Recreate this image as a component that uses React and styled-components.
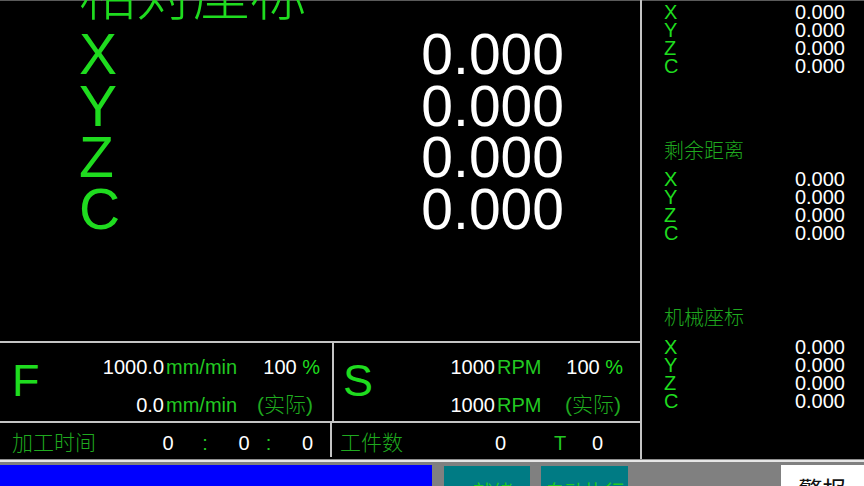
import React from "react";
import styled, { createGlobalStyle } from "styled-components";

const GlobalStyle = createGlobalStyle`
  html, body {
    margin: 0;
    padding: 0;
    background: #000;
    overflow: hidden;
  }
  body {
    font-family: "Liberation Sans", Arial, "Noto Sans CJK SC", sans-serif;
  }
`;

const GREEN = "#1fdc1f";
const UNIT = "#22c822";
const LABEL = "#1fa91f";
const LINE = "#c4c4c4";
const CJK = `"Liberation Sans", "Noto Sans CJK SC", sans-serif`;

const Screen = styled.div`
  width: 864px;
  height: 486px;
  overflow: hidden;
  background: #000;
  box-shadow: inset 0 1px 0 #5a5a5a;
`;

// the capture starts part-way into the machine screen
const Frame = styled.div`
  margin-top: -40px;
  display: flex;
  flex-direction: column;
`;

const Main = styled.div`
  display: flex;
  height: 499px;
`;

const LeftCol = styled.div`
  width: 640px;
  flex-shrink: 0;
  display: flex;
  flex-direction: column;
  border-right: 2px solid ${LINE};
`;

const RightCol = styled.div`
  flex: 1;
  padding: 10px 19px 0 22px;
`;

const CoordPanel = styled.div`
  height: 383px;
  flex-shrink: 0;
  padding: 7px 76px 0 79px;
  box-sizing: border-box;
  border-bottom: 2px solid ${LINE};
`;

const BigTitle = styled.div`
  font-family: ${CJK};
  font-weight: 300;
  font-size: 57px;
  line-height: 56px;
  color: ${GREEN};
  margin-bottom: 6px;
`;

const BigRow = styled.div`
  display: flex;
  justify-content: space-between;
  font-size: 57px;
  line-height: 51.5px;
`;

const Axis = styled.span`
  color: ${GREEN};
`;

const Value = styled.span`
  color: #fff;
`;

const Group = styled.div`
  margin-bottom: 63px;
`;

const GroupTitle = styled.div`
  font-family: ${CJK};
  font-weight: 300;
  font-size: 20px;
  line-height: 26px;
  color: ${LABEL};
  margin-bottom: 6.5px;
`;

const SmallRow = styled.div`
  display: flex;
  justify-content: space-between;
  font-size: 20px;
  line-height: 18px;
`;

const Band = styled.div`
  display: flex;
  flex-shrink: 0;
  height: ${(p) => p.h}px;
  border-bottom: ${(p) => (p.ruled ? `2px solid ${LINE}` : "none")};
`;

const FeedCell = styled.div`
  width: ${(p) => (p.w ? `${p.w}px` : "auto")};
  flex: ${(p) => (p.w ? "none" : "1")};
  border-right: ${(p) => (p.w ? `2px solid ${LINE}` : "none")};
  display: grid;
  grid-template-columns: ${(p) => p.cols};
  grid-template-rows: 38px 36px;
  padding-top: 5px;
  font-size: 20px;
  line-height: 38px;
  white-space: nowrap;
`;

const FeedLetter = styled.div`
  grid-row: 1 / span 2;
  align-self: start;
  margin-top: 11px;
  padding-left: ${(p) => p.pad}px;
  font-size: 45px;
  line-height: 44px;
  color: ${GREEN};
`;

const Num = styled.div`
  color: #fff;
  text-align: right;
`;

const Unit = styled.div`
  color: ${UNIT};
  padding-left: 2px;
`;

const Pct = styled.div`
  text-align: ${(p) => (p.left ? "left" : "right")};
  color: #fff;
`;

const Actual = styled.span`
  font-family: ${CJK};
  font-weight: 300;
  font-size: 21px;
  color: ${LABEL};
`;

const TimeCell = styled.div`
  width: ${(p) => (p.w ? `${p.w}px` : "auto")};
  flex: ${(p) => (p.w ? "none" : "1")};
  border-right: ${(p) => (p.w ? `2px solid ${LINE}` : "none")};
  display: grid;
  grid-template-columns: ${(p) => p.cols};
  justify-items: center;
  padding-top: 3px;
  box-sizing: border-box;
  font-size: 20px;
  line-height: 34px;
  white-space: nowrap;
`;

const TimeLabel = styled.div`
  justify-self: start;
  padding-left: ${(p) => p.pad}px;
  font-family: ${CJK};
  font-weight: 300;
  font-size: 21px;
  color: ${LABEL};
`;

const Tick = styled.div`
  color: ${(p) => (p.green ? UNIT : "#fff")};
`;

const Rule = styled.div`
  height: 3px;
  background: linear-gradient(#8e8e8e 0 1px, #e6e6e6 1px 3px);
`;

const Strip = styled.div`
  display: flex;
  align-items: flex-start;
  height: 30px;
  padding-top: 3px;
  background: #808080;
`;

const Progress = styled.div`
  width: 432px;
  height: 40px;
  background: #0000ff;
`;

const SoftKey = styled.div`
  width: ${(p) => p.w}px;
  margin-left: ${(p) => p.gap}px;
  margin-top: 1px;
  height: 40px;
  background: #007b84;
  color: ${UNIT};
  font-family: ${CJK};
  font-size: 20px;
  line-height: 20px;
  padding-top: 17px;
  box-sizing: border-box;
  text-align: center;
  white-space: nowrap;
`;

const Spacer = styled.div`
  flex: 1;
`;

const AlarmBox = styled.div`
  width: 83px;
  height: 40px;
  background: #fff;
  color: #111;
  font-family: ${CJK};
  font-size: 24px;
  line-height: 24px;
  padding-top: 14px;
  box-sizing: border-box;
  text-align: center;
`;

const axes = ["X", "Y", "Z", "C"];

const groups = ["绝对座标", "剩余距离", "机械座标"];

export default function App() {
  return (
    <>
      <GlobalStyle />
      <Screen>
        <Frame>
          <Main>
            <LeftCol>
              <CoordPanel>
                <BigTitle>相对座标</BigTitle>
                {axes.map((a) => (
                  <BigRow key={a}>
                    <Axis>{a}</Axis>
                    <Value>0.000</Value>
                  </BigRow>
                ))}
              </CoordPanel>

              <Band h={78} ruled>
                <FeedCell w={332} cols="100px 64px 93px 63px">
                  <FeedLetter pad={12}>F</FeedLetter>
                  <Num>1000.0</Num>
                  <Unit>mm/min</Unit>
                  <Pct>
                    100 <Axis>%</Axis>
                  </Pct>
                  <Num>0.0</Num>
                  <Unit>mm/min</Unit>
                  <Pct left>
                    <Actual>(实际)</Actual>
                  </Pct>
                </FeedCell>
                <FeedCell cols="100px 61px 70px 58px">
                  <FeedLetter pad={9}>S</FeedLetter>
                  <Num>1000</Num>
                  <Unit>RPM</Unit>
                  <Pct>
                    100 <Axis>%</Axis>
                  </Pct>
                  <Num>1000</Num>
                  <Unit>RPM</Unit>
                  <Pct left>
                    <Actual>(实际)</Actual>
                  </Pct>
                </FeedCell>
              </Band>

              <Band h={34}>
                <TimeCell w={332} cols="160px 16px 58px 20px 29px 49px">
                  <TimeLabel pad={12}>加工时间</TimeLabel>
                  <Tick>0</Tick>
                  <Tick green>:</Tick>
                  <Tick>0</Tick>
                  <Tick green>:</Tick>
                  <Tick>0</Tick>
                </TimeCell>
                <TimeCell cols="136px 65px 54px 21px">
                  <TimeLabel pad={8}>工件数</TimeLabel>
                  <Tick>0</Tick>
                  <Tick green>T</Tick>
                  <Tick>0</Tick>
                </TimeCell>
              </Band>
            </LeftCol>

            <RightCol>
              {groups.map((g) => (
                <Group key={g}>
                  <GroupTitle>{g}</GroupTitle>
                  {axes.map((a) => (
                    <SmallRow key={a}>
                      <Axis>{a}</Axis>
                      <Value>0.000</Value>
                    </SmallRow>
                  ))}
                </Group>
              ))}
            </RightCol>
          </Main>

          <Rule />
          <Strip>
            <Progress />
            <SoftKey w={86} gap={12}>●就绪</SoftKey>
            <SoftKey w={87} gap={11}>自动执行</SoftKey>
            <Spacer />
            <AlarmBox>警报</AlarmBox>
          </Strip>
        </Frame>
      </Screen>
    </>
  );
}
